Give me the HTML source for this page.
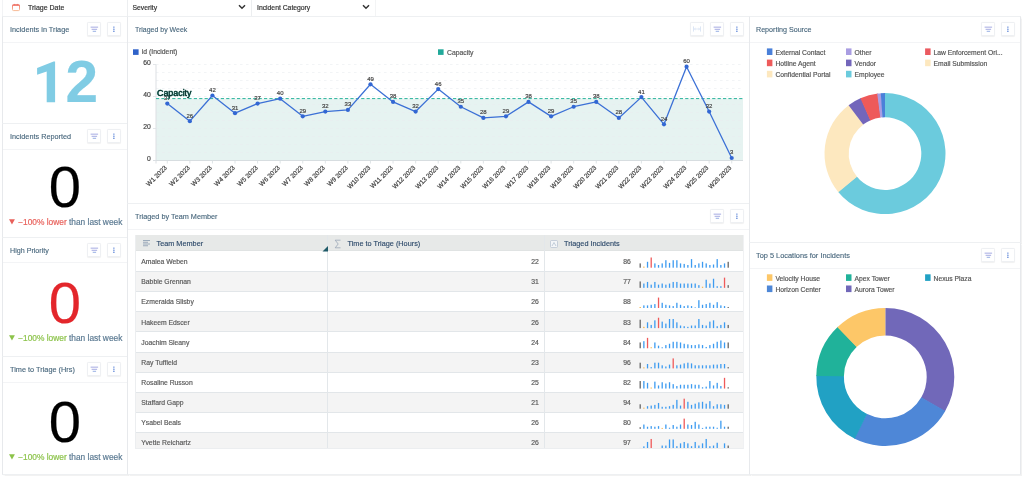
<!DOCTYPE html><html><head><meta charset="utf-8"><style>
*{box-sizing:border-box}
html,body{will-change:transform;-webkit-text-stroke-width:0.18px;margin:0;padding:0;width:1024px;height:478px;overflow:hidden;background:#fff;font-family:"Liberation Sans", sans-serif;}
.a{position:absolute;white-space:nowrap}
.panel{position:absolute;background:#fff;border:1px solid #eef0f2;border-left-color:#e7e9ec;border-right-color:#e7e9ec;box-shadow:0.5px 0.5px 1px rgba(0,0,0,0.05)}
.t{position:absolute;font-size:7.8px;color:#46657b;white-space:nowrap;line-height:10px;transform:scaleX(0.915);transform-origin:0 0;-webkit-text-stroke:0.12px #46657b}
.btn{position:absolute;width:14px;height:14px;border:1px solid #eef0f3;border-radius:1.5px;background:#fff;box-shadow:0 0.5px 1px rgba(0,0,0,0.06)}
.hd{position:absolute;height:1px;background:#f3f4f6}
</style></head><body>

<div class="a" style="left:127px;top:0;width:1px;height:16px;background:#eceef0"></div>
<div class="a" style="left:251px;top:0;width:1px;height:16px;background:#eceef0"></div>
<div class="a" style="left:375px;top:0;width:1px;height:16px;background:#f3f4f5"></div>
<svg class="a" style="left:11px;top:3px" width="10" height="9" viewBox="0 0 10 9">
<defs><linearGradient id="cg" x1="0" y1="0" x2="0" y2="1"><stop offset="0" stop-color="#ef6f62"/><stop offset="1" stop-color="#f6b38a"/></linearGradient></defs>
<rect x="1.5" y="1.7" width="7" height="5.9" rx="1" fill="none" stroke="url(#cg)" stroke-width="0.9"/>
<rect x="1.5" y="1.7" width="7" height="1.1" fill="#ef6f62"/>
<rect x="2.9" y="0.9" width="0.8" height="1.2" fill="#ef6f62"/><rect x="6.3" y="0.9" width="0.8" height="1.2" fill="#ef6f62"/>
</svg>
<div class="a" style="left:2px;top:0;width:1px;height:16px;background:#f2f3f5"></div>
<div class="a" style="left:28px;top:3px;font-size:7px;color:#333;line-height:10px">Triage Date</div>
<div class="a" style="left:132.5px;top:3px;font-size:6.8px;color:#333;line-height:10px">Severity</div>
<svg class="a" style="left:237.5px;top:4px" width="8" height="6" viewBox="0 0 8 6"><path d="M1 1.3 L4 4.2 L7 1.3" fill="none" stroke="#333" stroke-width="1.5"/></svg>
<div class="a" style="left:257px;top:3px;font-size:6.8px;color:#333;line-height:10px">Incident Category</div>
<svg class="a" style="left:362.3px;top:4px" width="8" height="6" viewBox="0 0 8 6"><path d="M1 1.3 L4 4.2 L7 1.3" fill="none" stroke="#333" stroke-width="1.5"/></svg>
<div class="panel" style="left:2px;top:16px;width:126px;height:108px"></div>
<div class="hd" style="left:3px;top:42px;width:124px"></div>
<div class="t" style="left:9.5px;top:25.05px;transform:scaleX(0.9370)">Incidents in Triage</div>
<div class="btn" style="left:107.20px;top:22.30px"></div>
<svg class="a" style="left:107.20px;top:22.30px" width="14" height="14" viewBox="0 0 14 14"><circle cx="6.9" cy="5.1" r="0.72" fill="#3f6fd0"/><circle cx="6.9" cy="7.15" r="0.72" fill="#3f6fd0"/><circle cx="6.9" cy="9.2" r="0.72" fill="#3f6fd0"/></svg>
<div class="btn" style="left:87.35px;top:22.30px"></div>
<svg class="a" style="left:87.35px;top:22.30px" width="14" height="14" viewBox="0 0 14 14"><rect x="3.6" y="4.75" width="7.5" height="0.7" fill="#7f86d6"/><rect x="4.6" y="6.85" width="5.5" height="0.7" fill="#7f86d6"/><rect x="5.7" y="8.85" width="3.4" height="0.7" fill="#6a8cd8"/></svg>
<div class="panel" style="left:2px;top:123px;width:126px;height:115px"></div>
<div class="hd" style="left:3px;top:149px;width:124px"></div>
<div class="t" style="left:9.5px;top:132.05px;transform:scaleX(0.9333)">Incidents Reported</div>
<div class="btn" style="left:107.20px;top:129.30px"></div>
<svg class="a" style="left:107.20px;top:129.30px" width="14" height="14" viewBox="0 0 14 14"><circle cx="6.9" cy="5.1" r="0.72" fill="#3f6fd0"/><circle cx="6.9" cy="7.15" r="0.72" fill="#3f6fd0"/><circle cx="6.9" cy="9.2" r="0.72" fill="#3f6fd0"/></svg>
<div class="btn" style="left:87.35px;top:129.30px"></div>
<svg class="a" style="left:87.35px;top:129.30px" width="14" height="14" viewBox="0 0 14 14"><rect x="3.6" y="4.75" width="7.5" height="0.7" fill="#7f86d6"/><rect x="4.6" y="6.85" width="5.5" height="0.7" fill="#7f86d6"/><rect x="5.7" y="8.85" width="3.4" height="0.7" fill="#6a8cd8"/></svg>
<div class="panel" style="left:2px;top:237px;width:126px;height:120px"></div>
<div class="hd" style="left:3px;top:262px;width:124px"></div>
<div class="t" style="left:9.5px;top:245.55px;transform:scaleX(0.9150)">High Priority</div>
<div class="btn" style="left:107.20px;top:242.80px"></div>
<svg class="a" style="left:107.20px;top:242.80px" width="14" height="14" viewBox="0 0 14 14"><circle cx="6.9" cy="5.1" r="0.72" fill="#3f6fd0"/><circle cx="6.9" cy="7.15" r="0.72" fill="#3f6fd0"/><circle cx="6.9" cy="9.2" r="0.72" fill="#3f6fd0"/></svg>
<div class="btn" style="left:87.35px;top:242.80px"></div>
<svg class="a" style="left:87.35px;top:242.80px" width="14" height="14" viewBox="0 0 14 14"><rect x="3.6" y="4.75" width="7.5" height="0.7" fill="#7f86d6"/><rect x="4.6" y="6.85" width="5.5" height="0.7" fill="#7f86d6"/><rect x="5.7" y="8.85" width="3.4" height="0.7" fill="#6a8cd8"/></svg>
<div class="panel" style="left:2px;top:356px;width:126px;height:119px"></div>
<div class="hd" style="left:3px;top:382px;width:124px"></div>
<div class="t" style="left:9.5px;top:364.55px;transform:scaleX(0.9397)">Time to Triage (Hrs)</div>
<div class="btn" style="left:107.20px;top:361.80px"></div>
<svg class="a" style="left:107.20px;top:361.80px" width="14" height="14" viewBox="0 0 14 14"><circle cx="6.9" cy="5.1" r="0.72" fill="#3f6fd0"/><circle cx="6.9" cy="7.15" r="0.72" fill="#3f6fd0"/><circle cx="6.9" cy="9.2" r="0.72" fill="#3f6fd0"/></svg>
<div class="btn" style="left:87.35px;top:361.80px"></div>
<svg class="a" style="left:87.35px;top:361.80px" width="14" height="14" viewBox="0 0 14 14"><rect x="3.6" y="4.75" width="7.5" height="0.7" fill="#7f86d6"/><rect x="4.6" y="6.85" width="5.5" height="0.7" fill="#7f86d6"/><rect x="5.7" y="8.85" width="3.4" height="0.7" fill="#6a8cd8"/></svg>
<div class="panel" style="left:127px;top:16px;width:623px;height:188px"></div>
<div class="hd" style="left:128px;top:42px;width:621px"></div>
<div class="t" style="left:134.5px;top:25.05px;transform:scaleX(0.8930)">Triaged by Week</div>
<div class="btn" style="left:729.70px;top:22.30px"></div>
<svg class="a" style="left:729.70px;top:22.30px" width="14" height="14" viewBox="0 0 14 14"><circle cx="6.9" cy="5.1" r="0.72" fill="#3f6fd0"/><circle cx="6.9" cy="7.15" r="0.72" fill="#3f6fd0"/><circle cx="6.9" cy="9.2" r="0.72" fill="#3f6fd0"/></svg>
<div class="btn" style="left:709.85px;top:22.30px"></div>
<svg class="a" style="left:709.85px;top:22.30px" width="14" height="14" viewBox="0 0 14 14"><rect x="3.6" y="4.75" width="7.5" height="0.7" fill="#7f86d6"/><rect x="4.6" y="6.85" width="5.5" height="0.7" fill="#7f86d6"/><rect x="5.7" y="8.85" width="3.4" height="0.7" fill="#6a8cd8"/></svg>
<div class="btn" style="left:690.00px;top:22.30px"></div>
<svg class="a" style="left:690.00px;top:22.30px" width="14" height="14" viewBox="0 0 14 14"><rect x="3.2" y="4.4" width="0.6" height="5.2" fill="#c5d5ee"/><rect x="10.2" y="4.4" width="0.6" height="5.2" fill="#c5d5ee"/><path d="M4.4 7 H9.6 M4.4 7 L5.6 6.1 M4.4 7 L5.6 7.9 M9.6 7 L8.4 6.1 M9.6 7 L8.4 7.9" stroke="#c5d5ee" stroke-width="0.5" fill="none"/></svg>
<div class="panel" style="left:127px;top:203px;width:623px;height:272px"></div>
<div class="hd" style="left:128px;top:229px;width:621px"></div>
<div class="t" style="left:134.5px;top:212.05px;transform:scaleX(0.9333)">Triaged by Team Member</div>
<div class="btn" style="left:729.70px;top:209.30px"></div>
<svg class="a" style="left:729.70px;top:209.30px" width="14" height="14" viewBox="0 0 14 14"><circle cx="6.9" cy="5.1" r="0.72" fill="#3f6fd0"/><circle cx="6.9" cy="7.15" r="0.72" fill="#3f6fd0"/><circle cx="6.9" cy="9.2" r="0.72" fill="#3f6fd0"/></svg>
<div class="btn" style="left:709.85px;top:209.30px"></div>
<svg class="a" style="left:709.85px;top:209.30px" width="14" height="14" viewBox="0 0 14 14"><rect x="3.6" y="4.75" width="7.5" height="0.7" fill="#7f86d6"/><rect x="4.6" y="6.85" width="5.5" height="0.7" fill="#7f86d6"/><rect x="5.7" y="8.85" width="3.4" height="0.7" fill="#6a8cd8"/></svg>
<div class="panel" style="left:749px;top:16px;width:272px;height:227px"></div>
<div class="hd" style="left:750px;top:42px;width:270px"></div>
<div class="t" style="left:756.0px;top:25.05px;transform:scaleX(0.9150)">Reporting Source</div>
<div class="btn" style="left:1001.20px;top:22.30px"></div>
<svg class="a" style="left:1001.20px;top:22.30px" width="14" height="14" viewBox="0 0 14 14"><circle cx="6.9" cy="5.1" r="0.72" fill="#3f6fd0"/><circle cx="6.9" cy="7.15" r="0.72" fill="#3f6fd0"/><circle cx="6.9" cy="9.2" r="0.72" fill="#3f6fd0"/></svg>
<div class="btn" style="left:981.35px;top:22.30px"></div>
<svg class="a" style="left:981.35px;top:22.30px" width="14" height="14" viewBox="0 0 14 14"><rect x="3.6" y="4.75" width="7.5" height="0.7" fill="#7f86d6"/><rect x="4.6" y="6.85" width="5.5" height="0.7" fill="#7f86d6"/><rect x="5.7" y="8.85" width="3.4" height="0.7" fill="#6a8cd8"/></svg>
<div class="panel" style="left:749px;top:242px;width:272px;height:233px"></div>
<div class="hd" style="left:750px;top:268px;width:270px"></div>
<div class="t" style="left:756.0px;top:251.05px;transform:scaleX(0.9461)">Top 5 Locations for Incidents</div>
<div class="btn" style="left:1001.20px;top:248.30px"></div>
<svg class="a" style="left:1001.20px;top:248.30px" width="14" height="14" viewBox="0 0 14 14"><circle cx="6.9" cy="5.1" r="0.72" fill="#3f6fd0"/><circle cx="6.9" cy="7.15" r="0.72" fill="#3f6fd0"/><circle cx="6.9" cy="9.2" r="0.72" fill="#3f6fd0"/></svg>
<div class="btn" style="left:981.35px;top:248.30px"></div>
<svg class="a" style="left:981.35px;top:248.30px" width="14" height="14" viewBox="0 0 14 14"><rect x="3.6" y="4.75" width="7.5" height="0.7" fill="#7f86d6"/><rect x="4.6" y="6.85" width="5.5" height="0.7" fill="#7f86d6"/><rect x="5.7" y="8.85" width="3.4" height="0.7" fill="#6a8cd8"/></svg>
<svg class="a" style="left:0;top:0" width="130" height="120" viewBox="0 0 130 120"><path d="M55.1,61.6 L55.1,102.2 L46.7,102.2 L46.7,71.4 L37.1,74.7 L37.1,67.9 L53.6,61.6 Z" fill="#80cce4"/></svg>
<div class="a" style="left:65.6px;top:51.6px;font-size:58.5px;line-height:60px;font-weight:bold;color:#80cce4">2</div>
<div class="a" style="left:3px;width:124px;top:156.8px;text-align:center;font-size:58px;line-height:60px;color:#000">0</div>
<div class="a" style="left:9.3px;top:216.9px;font-size:8.35px;line-height:10px;color:#5b7a92"><span style="color:#e8605a"><svg width="7" height="7" viewBox="0 0 7 7" style="position:absolute;left:0.1px;top:2.6px"><path d="M0 0.3 H5.9 L2.95 5.6 Z" fill="#e8605a"/></svg><span style="position:absolute;left:8.9px;top:0">&minus;100% lower<span style="color:#5b7a92"> than last week</span></span></span></div>
<div class="a" style="left:3px;width:124px;top:272.7px;text-align:center;font-size:58px;line-height:60px;color:#e3262b">0</div>
<div class="a" style="left:9.3px;top:332.9px;font-size:8.35px;line-height:10px;color:#5b7a92"><span style="color:#8cc34a"><svg width="7" height="7" viewBox="0 0 7 7" style="position:absolute;left:0.1px;top:2.6px"><path d="M0 0.3 H5.9 L2.95 5.6 Z" fill="#8cc34a"/></svg><span style="position:absolute;left:8.9px;top:0">&minus;100% lower<span style="color:#5b7a92"> than last week</span></span></span></div>
<div class="a" style="left:3px;width:124px;top:392px;text-align:center;font-size:58px;line-height:60px;color:#000">0</div>
<div class="a" style="left:9.3px;top:451.79999999999995px;font-size:8.35px;line-height:10px;color:#5b7a92"><span style="color:#8cc34a"><svg width="7" height="7" viewBox="0 0 7 7" style="position:absolute;left:0.1px;top:2.6px"><path d="M0 0.3 H5.9 L2.95 5.6 Z" fill="#8cc34a"/></svg><span style="position:absolute;left:8.9px;top:0">&minus;100% lower<span style="color:#5b7a92"> than last week</span></span></span></div>
<svg class="a" style="left:0;top:0" width="1024" height="478" viewBox="0 0 1024 478">
<rect x="133" y="49.3" width="5.6" height="5.6" fill="#2f62c9"/>

<rect x="438" y="49.3" width="5.6" height="5.6" fill="#22a99a"/>
<rect x="156.0" y="98.6" width="587.0" height="61.900000000000006" fill="#e6f3f1"/>
<line x1="156.0" y1="64.5" x2="743.0" y2="64.5" stroke="#eaedf0" stroke-width="0.6" stroke-dasharray="2.5,3.5"/>
<line x1="156.0" y1="72.5" x2="743.0" y2="72.5" stroke="#eaedf0" stroke-width="0.6" stroke-dasharray="2.5,3.5"/>
<line x1="156.0" y1="80.5" x2="743.0" y2="80.5" stroke="#eaedf0" stroke-width="0.6" stroke-dasharray="2.5,3.5"/>
<line x1="156.0" y1="88.5" x2="743.0" y2="88.5" stroke="#eaedf0" stroke-width="0.6" stroke-dasharray="2.5,3.5"/>
<line x1="156.0" y1="96.5" x2="743.0" y2="96.5" stroke="#eaedf0" stroke-width="0.6" stroke-dasharray="2.5,3.5"/>
<line x1="156.0" y1="104.5" x2="743.0" y2="104.5" stroke="#eaedf0" stroke-width="0.6" stroke-dasharray="2.5,3.5"/>
<line x1="156.0" y1="112.5" x2="743.0" y2="112.5" stroke="#eaedf0" stroke-width="0.6" stroke-dasharray="2.5,3.5"/>
<line x1="156.0" y1="120.5" x2="743.0" y2="120.5" stroke="#eaedf0" stroke-width="0.6" stroke-dasharray="2.5,3.5"/>
<line x1="156.0" y1="128.5" x2="743.0" y2="128.5" stroke="#eaedf0" stroke-width="0.6" stroke-dasharray="2.5,3.5"/>
<line x1="156.0" y1="136.5" x2="743.0" y2="136.5" stroke="#eaedf0" stroke-width="0.6" stroke-dasharray="2.5,3.5"/>
<line x1="156.0" y1="144.5" x2="743.0" y2="144.5" stroke="#eaedf0" stroke-width="0.6" stroke-dasharray="2.5,3.5"/>
<line x1="156.0" y1="152.5" x2="743.0" y2="152.5" stroke="#eaedf0" stroke-width="0.6" stroke-dasharray="2.5,3.5"/>
<line x1="156.0" y1="64.5" x2="156.0" y2="163.5" stroke="#dcdfe3" stroke-width="1"/>
<line x1="153.0" y1="160.5" x2="743.0" y2="160.5" stroke="#d7dde0" stroke-width="1"/>
<line x1="153.0" y1="160.5" x2="156.0" y2="160.5" stroke="#dcdfe3" stroke-width="0.8"/>
<line x1="153.0" y1="128.5" x2="156.0" y2="128.5" stroke="#dcdfe3" stroke-width="0.8"/>
<line x1="153.0" y1="96.5" x2="156.0" y2="96.5" stroke="#dcdfe3" stroke-width="0.8"/>
<line x1="153.0" y1="64.5" x2="156.0" y2="64.5" stroke="#dcdfe3" stroke-width="0.8"/>
<line x1="167.29" y1="160.5" x2="167.29" y2="163.5" stroke="#d7dde0" stroke-width="0.8"/>
<line x1="189.87" y1="160.5" x2="189.87" y2="163.5" stroke="#d7dde0" stroke-width="0.8"/>
<line x1="212.44" y1="160.5" x2="212.44" y2="163.5" stroke="#d7dde0" stroke-width="0.8"/>
<line x1="235.02" y1="160.5" x2="235.02" y2="163.5" stroke="#d7dde0" stroke-width="0.8"/>
<line x1="257.60" y1="160.5" x2="257.60" y2="163.5" stroke="#d7dde0" stroke-width="0.8"/>
<line x1="280.17" y1="160.5" x2="280.17" y2="163.5" stroke="#d7dde0" stroke-width="0.8"/>
<line x1="302.75" y1="160.5" x2="302.75" y2="163.5" stroke="#d7dde0" stroke-width="0.8"/>
<line x1="325.33" y1="160.5" x2="325.33" y2="163.5" stroke="#d7dde0" stroke-width="0.8"/>
<line x1="347.90" y1="160.5" x2="347.90" y2="163.5" stroke="#d7dde0" stroke-width="0.8"/>
<line x1="370.48" y1="160.5" x2="370.48" y2="163.5" stroke="#d7dde0" stroke-width="0.8"/>
<line x1="393.06" y1="160.5" x2="393.06" y2="163.5" stroke="#d7dde0" stroke-width="0.8"/>
<line x1="415.63" y1="160.5" x2="415.63" y2="163.5" stroke="#d7dde0" stroke-width="0.8"/>
<line x1="438.21" y1="160.5" x2="438.21" y2="163.5" stroke="#d7dde0" stroke-width="0.8"/>
<line x1="460.79" y1="160.5" x2="460.79" y2="163.5" stroke="#d7dde0" stroke-width="0.8"/>
<line x1="483.37" y1="160.5" x2="483.37" y2="163.5" stroke="#d7dde0" stroke-width="0.8"/>
<line x1="505.94" y1="160.5" x2="505.94" y2="163.5" stroke="#d7dde0" stroke-width="0.8"/>
<line x1="528.52" y1="160.5" x2="528.52" y2="163.5" stroke="#d7dde0" stroke-width="0.8"/>
<line x1="551.10" y1="160.5" x2="551.10" y2="163.5" stroke="#d7dde0" stroke-width="0.8"/>
<line x1="573.67" y1="160.5" x2="573.67" y2="163.5" stroke="#d7dde0" stroke-width="0.8"/>
<line x1="596.25" y1="160.5" x2="596.25" y2="163.5" stroke="#d7dde0" stroke-width="0.8"/>
<line x1="618.83" y1="160.5" x2="618.83" y2="163.5" stroke="#d7dde0" stroke-width="0.8"/>
<line x1="641.40" y1="160.5" x2="641.40" y2="163.5" stroke="#d7dde0" stroke-width="0.8"/>
<line x1="663.98" y1="160.5" x2="663.98" y2="163.5" stroke="#d7dde0" stroke-width="0.8"/>
<line x1="686.56" y1="160.5" x2="686.56" y2="163.5" stroke="#d7dde0" stroke-width="0.8"/>
<line x1="709.13" y1="160.5" x2="709.13" y2="163.5" stroke="#d7dde0" stroke-width="0.8"/>
<line x1="731.71" y1="160.5" x2="731.71" y2="163.5" stroke="#d7dde0" stroke-width="0.8"/>
<line x1="156.0" y1="98.6" x2="743.0" y2="98.6" stroke="#2bb39b" stroke-width="1" stroke-dasharray="3.2,2.2"/>
<polyline points="167.29,103.53 189.87,121.15 212.44,95.52 235.02,113.14 257.60,103.53 280.17,98.72 302.75,116.34 325.33,111.54 347.90,109.93 370.48,84.30 393.06,101.92 415.63,111.54 438.21,89.11 460.79,106.73 483.37,117.94 505.94,116.34 528.52,101.92 551.10,116.34 573.67,106.73 596.25,101.92 618.83,117.94 641.40,97.12 663.98,124.35 686.56,66.68 709.13,111.54 731.71,157.99" fill="none" stroke="#3b70d6" stroke-width="1.3" stroke-linejoin="round"/>
<circle cx="167.29" cy="103.53" r="2.1" fill="#3267d3"/>
<circle cx="189.87" cy="121.15" r="2.1" fill="#3267d3"/>
<circle cx="212.44" cy="95.52" r="2.1" fill="#3267d3"/>
<circle cx="235.02" cy="113.14" r="2.1" fill="#3267d3"/>
<circle cx="257.60" cy="103.53" r="2.1" fill="#3267d3"/>
<circle cx="280.17" cy="98.72" r="2.1" fill="#3267d3"/>
<circle cx="302.75" cy="116.34" r="2.1" fill="#3267d3"/>
<circle cx="325.33" cy="111.54" r="2.1" fill="#3267d3"/>
<circle cx="347.90" cy="109.93" r="2.1" fill="#3267d3"/>
<circle cx="370.48" cy="84.30" r="2.1" fill="#3267d3"/>
<circle cx="393.06" cy="101.92" r="2.1" fill="#3267d3"/>
<circle cx="415.63" cy="111.54" r="2.1" fill="#3267d3"/>
<circle cx="438.21" cy="89.11" r="2.1" fill="#3267d3"/>
<circle cx="460.79" cy="106.73" r="2.1" fill="#3267d3"/>
<circle cx="483.37" cy="117.94" r="2.1" fill="#3267d3"/>
<circle cx="505.94" cy="116.34" r="2.1" fill="#3267d3"/>
<circle cx="528.52" cy="101.92" r="2.1" fill="#3267d3"/>
<circle cx="551.10" cy="116.34" r="2.1" fill="#3267d3"/>
<circle cx="573.67" cy="106.73" r="2.1" fill="#3267d3"/>
<circle cx="596.25" cy="101.92" r="2.1" fill="#3267d3"/>
<circle cx="618.83" cy="117.94" r="2.1" fill="#3267d3"/>
<circle cx="641.40" cy="97.12" r="2.1" fill="#3267d3"/>
<circle cx="663.98" cy="124.35" r="2.1" fill="#3267d3"/>
<circle cx="686.56" cy="66.68" r="2.1" fill="#3267d3"/>
<circle cx="709.13" cy="111.54" r="2.1" fill="#3267d3"/>
<circle cx="731.71" cy="157.99" r="2.1" fill="#3267d3"/>
</svg>
<div class="a" style="left:141.8px;top:47.4px;font-size:6.8px;line-height:10px;color:#555">id (Incident)</div>
<div class="a" style="left:447px;top:47.7px;font-size:6.8px;line-height:10px;color:#555">Capacity</div>
<div class="a" style="left:120px;width:30.8px;text-align:right;top:153.5px;font-size:6.8px;line-height:10px;color:#444">0</div>
<div class="a" style="left:120px;width:30.8px;text-align:right;top:121.5px;font-size:6.8px;line-height:10px;color:#444">20</div>
<div class="a" style="left:120px;width:30.8px;text-align:right;top:89.5px;font-size:6.8px;line-height:10px;color:#444">40</div>
<div class="a" style="left:120px;width:30.8px;text-align:right;top:57.5px;font-size:6.8px;line-height:10px;color:#444">60</div>
<div class="a" style="left:157.29px;width:20px;text-align:center;top:93.93px;font-size:6px;line-height:8px;color:#444">37</div>
<div class="a" style="left:179.87px;width:20px;text-align:center;top:111.55px;font-size:6px;line-height:8px;color:#444">26</div>
<div class="a" style="left:202.44px;width:20px;text-align:center;top:85.92px;font-size:6px;line-height:8px;color:#444">42</div>
<div class="a" style="left:225.02px;width:20px;text-align:center;top:103.54px;font-size:6px;line-height:8px;color:#444">31</div>
<div class="a" style="left:247.60px;width:20px;text-align:center;top:93.93px;font-size:6px;line-height:8px;color:#444">37</div>
<div class="a" style="left:270.17px;width:20px;text-align:center;top:89.12px;font-size:6px;line-height:8px;color:#444">40</div>
<div class="a" style="left:292.75px;width:20px;text-align:center;top:106.74px;font-size:6px;line-height:8px;color:#444">29</div>
<div class="a" style="left:315.33px;width:20px;text-align:center;top:101.94px;font-size:6px;line-height:8px;color:#444">32</div>
<div class="a" style="left:337.90px;width:20px;text-align:center;top:100.33px;font-size:6px;line-height:8px;color:#444">33</div>
<div class="a" style="left:360.48px;width:20px;text-align:center;top:74.70px;font-size:6px;line-height:8px;color:#444">49</div>
<div class="a" style="left:383.06px;width:20px;text-align:center;top:92.32px;font-size:6px;line-height:8px;color:#444">38</div>
<div class="a" style="left:405.63px;width:20px;text-align:center;top:101.94px;font-size:6px;line-height:8px;color:#444">32</div>
<div class="a" style="left:428.21px;width:20px;text-align:center;top:79.51px;font-size:6px;line-height:8px;color:#444">46</div>
<div class="a" style="left:450.79px;width:20px;text-align:center;top:97.13px;font-size:6px;line-height:8px;color:#444">35</div>
<div class="a" style="left:473.37px;width:20px;text-align:center;top:108.34px;font-size:6px;line-height:8px;color:#444">28</div>
<div class="a" style="left:495.94px;width:20px;text-align:center;top:106.74px;font-size:6px;line-height:8px;color:#444">29</div>
<div class="a" style="left:518.52px;width:20px;text-align:center;top:92.32px;font-size:6px;line-height:8px;color:#444">38</div>
<div class="a" style="left:541.10px;width:20px;text-align:center;top:106.74px;font-size:6px;line-height:8px;color:#444">29</div>
<div class="a" style="left:563.67px;width:20px;text-align:center;top:97.13px;font-size:6px;line-height:8px;color:#444">35</div>
<div class="a" style="left:586.25px;width:20px;text-align:center;top:92.32px;font-size:6px;line-height:8px;color:#444">38</div>
<div class="a" style="left:608.83px;width:20px;text-align:center;top:108.34px;font-size:6px;line-height:8px;color:#444">28</div>
<div class="a" style="left:631.40px;width:20px;text-align:center;top:87.52px;font-size:6px;line-height:8px;color:#444">41</div>
<div class="a" style="left:653.98px;width:20px;text-align:center;top:114.75px;font-size:6px;line-height:8px;color:#444">24</div>
<div class="a" style="left:676.56px;width:20px;text-align:center;top:57.08px;font-size:6px;line-height:8px;color:#444">60</div>
<div class="a" style="left:699.13px;width:20px;text-align:center;top:101.94px;font-size:6px;line-height:8px;color:#444">32</div>
<div class="a" style="left:721.71px;width:20px;text-align:center;top:148.39px;font-size:6px;line-height:8px;color:#444">3</div>
<div class="a" style="left:156.6px;top:86.9px;font-size:9.6px;line-height:12px;color:#0c2826;-webkit-text-stroke:0.3px #0c2826;text-shadow:0 0 0.8px #2bb39b,0 0 0.8px #2bb39b;transform:scaleX(0.925);transform-origin:0 0">Capacity</div>
<div class="a" style="left:163.29px;top:163.5px;width:0;height:0"><div style="position:absolute;right:0;top:0;transform-origin:100% 0;transform:rotate(-45deg);font-size:6.5px;line-height:8px;color:#444;-webkit-text-stroke:0.2px #444;white-space:nowrap">W1 2023</div></div>
<div class="a" style="left:185.87px;top:163.5px;width:0;height:0"><div style="position:absolute;right:0;top:0;transform-origin:100% 0;transform:rotate(-45deg);font-size:6.5px;line-height:8px;color:#444;-webkit-text-stroke:0.2px #444;white-space:nowrap">W2 2023</div></div>
<div class="a" style="left:208.44px;top:163.5px;width:0;height:0"><div style="position:absolute;right:0;top:0;transform-origin:100% 0;transform:rotate(-45deg);font-size:6.5px;line-height:8px;color:#444;-webkit-text-stroke:0.2px #444;white-space:nowrap">W3 2023</div></div>
<div class="a" style="left:231.02px;top:163.5px;width:0;height:0"><div style="position:absolute;right:0;top:0;transform-origin:100% 0;transform:rotate(-45deg);font-size:6.5px;line-height:8px;color:#444;-webkit-text-stroke:0.2px #444;white-space:nowrap">W4 2023</div></div>
<div class="a" style="left:253.60px;top:163.5px;width:0;height:0"><div style="position:absolute;right:0;top:0;transform-origin:100% 0;transform:rotate(-45deg);font-size:6.5px;line-height:8px;color:#444;-webkit-text-stroke:0.2px #444;white-space:nowrap">W5 2023</div></div>
<div class="a" style="left:276.17px;top:163.5px;width:0;height:0"><div style="position:absolute;right:0;top:0;transform-origin:100% 0;transform:rotate(-45deg);font-size:6.5px;line-height:8px;color:#444;-webkit-text-stroke:0.2px #444;white-space:nowrap">W6 2023</div></div>
<div class="a" style="left:298.75px;top:163.5px;width:0;height:0"><div style="position:absolute;right:0;top:0;transform-origin:100% 0;transform:rotate(-45deg);font-size:6.5px;line-height:8px;color:#444;-webkit-text-stroke:0.2px #444;white-space:nowrap">W7 2023</div></div>
<div class="a" style="left:321.33px;top:163.5px;width:0;height:0"><div style="position:absolute;right:0;top:0;transform-origin:100% 0;transform:rotate(-45deg);font-size:6.5px;line-height:8px;color:#444;-webkit-text-stroke:0.2px #444;white-space:nowrap">W8 2023</div></div>
<div class="a" style="left:343.90px;top:163.5px;width:0;height:0"><div style="position:absolute;right:0;top:0;transform-origin:100% 0;transform:rotate(-45deg);font-size:6.5px;line-height:8px;color:#444;-webkit-text-stroke:0.2px #444;white-space:nowrap">W9 2023</div></div>
<div class="a" style="left:366.48px;top:163.5px;width:0;height:0"><div style="position:absolute;right:0;top:0;transform-origin:100% 0;transform:rotate(-45deg);font-size:6.5px;line-height:8px;color:#444;-webkit-text-stroke:0.2px #444;white-space:nowrap">W10 2023</div></div>
<div class="a" style="left:389.06px;top:163.5px;width:0;height:0"><div style="position:absolute;right:0;top:0;transform-origin:100% 0;transform:rotate(-45deg);font-size:6.5px;line-height:8px;color:#444;-webkit-text-stroke:0.2px #444;white-space:nowrap">W11 2023</div></div>
<div class="a" style="left:411.63px;top:163.5px;width:0;height:0"><div style="position:absolute;right:0;top:0;transform-origin:100% 0;transform:rotate(-45deg);font-size:6.5px;line-height:8px;color:#444;-webkit-text-stroke:0.2px #444;white-space:nowrap">W12 2023</div></div>
<div class="a" style="left:434.21px;top:163.5px;width:0;height:0"><div style="position:absolute;right:0;top:0;transform-origin:100% 0;transform:rotate(-45deg);font-size:6.5px;line-height:8px;color:#444;-webkit-text-stroke:0.2px #444;white-space:nowrap">W13 2023</div></div>
<div class="a" style="left:456.79px;top:163.5px;width:0;height:0"><div style="position:absolute;right:0;top:0;transform-origin:100% 0;transform:rotate(-45deg);font-size:6.5px;line-height:8px;color:#444;-webkit-text-stroke:0.2px #444;white-space:nowrap">W14 2023</div></div>
<div class="a" style="left:479.37px;top:163.5px;width:0;height:0"><div style="position:absolute;right:0;top:0;transform-origin:100% 0;transform:rotate(-45deg);font-size:6.5px;line-height:8px;color:#444;-webkit-text-stroke:0.2px #444;white-space:nowrap">W15 2023</div></div>
<div class="a" style="left:501.94px;top:163.5px;width:0;height:0"><div style="position:absolute;right:0;top:0;transform-origin:100% 0;transform:rotate(-45deg);font-size:6.5px;line-height:8px;color:#444;-webkit-text-stroke:0.2px #444;white-space:nowrap">W16 2023</div></div>
<div class="a" style="left:524.52px;top:163.5px;width:0;height:0"><div style="position:absolute;right:0;top:0;transform-origin:100% 0;transform:rotate(-45deg);font-size:6.5px;line-height:8px;color:#444;-webkit-text-stroke:0.2px #444;white-space:nowrap">W17 2023</div></div>
<div class="a" style="left:547.10px;top:163.5px;width:0;height:0"><div style="position:absolute;right:0;top:0;transform-origin:100% 0;transform:rotate(-45deg);font-size:6.5px;line-height:8px;color:#444;-webkit-text-stroke:0.2px #444;white-space:nowrap">W18 2023</div></div>
<div class="a" style="left:569.67px;top:163.5px;width:0;height:0"><div style="position:absolute;right:0;top:0;transform-origin:100% 0;transform:rotate(-45deg);font-size:6.5px;line-height:8px;color:#444;-webkit-text-stroke:0.2px #444;white-space:nowrap">W19 2023</div></div>
<div class="a" style="left:592.25px;top:163.5px;width:0;height:0"><div style="position:absolute;right:0;top:0;transform-origin:100% 0;transform:rotate(-45deg);font-size:6.5px;line-height:8px;color:#444;-webkit-text-stroke:0.2px #444;white-space:nowrap">W20 2023</div></div>
<div class="a" style="left:614.83px;top:163.5px;width:0;height:0"><div style="position:absolute;right:0;top:0;transform-origin:100% 0;transform:rotate(-45deg);font-size:6.5px;line-height:8px;color:#444;-webkit-text-stroke:0.2px #444;white-space:nowrap">W21 2023</div></div>
<div class="a" style="left:637.40px;top:163.5px;width:0;height:0"><div style="position:absolute;right:0;top:0;transform-origin:100% 0;transform:rotate(-45deg);font-size:6.5px;line-height:8px;color:#444;-webkit-text-stroke:0.2px #444;white-space:nowrap">W22 2023</div></div>
<div class="a" style="left:659.98px;top:163.5px;width:0;height:0"><div style="position:absolute;right:0;top:0;transform-origin:100% 0;transform:rotate(-45deg);font-size:6.5px;line-height:8px;color:#444;-webkit-text-stroke:0.2px #444;white-space:nowrap">W23 2023</div></div>
<div class="a" style="left:682.56px;top:163.5px;width:0;height:0"><div style="position:absolute;right:0;top:0;transform-origin:100% 0;transform:rotate(-45deg);font-size:6.5px;line-height:8px;color:#444;-webkit-text-stroke:0.2px #444;white-space:nowrap">W24 2023</div></div>
<div class="a" style="left:705.13px;top:163.5px;width:0;height:0"><div style="position:absolute;right:0;top:0;transform-origin:100% 0;transform:rotate(-45deg);font-size:6.5px;line-height:8px;color:#444;-webkit-text-stroke:0.2px #444;white-space:nowrap">W25 2023</div></div>
<div class="a" style="left:727.71px;top:163.5px;width:0;height:0"><div style="position:absolute;right:0;top:0;transform-origin:100% 0;transform:rotate(-45deg);font-size:6.5px;line-height:8px;color:#444;-webkit-text-stroke:0.2px #444;white-space:nowrap">W26 2023</div></div>
<div class="a" style="left:135.0px;top:235.0px;width:608.0px;height:213.0px;overflow:hidden;background:#fff">
<div class="a" style="left:0;top:0;width:608.0px;height:16.0px;background:#e7e9e8;border-bottom:0.5px solid #e0e3e3"></div>
<div class="a" style="left:0;top:16.00px;width:608.0px;height:20.34px;background:#fff"></div>
<div class="a" style="left:6.30px;top:22.10px;font-size:6.8px;line-height:10px;color:#5a5a5a">Amalea Weben</div>
<div class="a" style="left:192.00px;width:211.80px;text-align:right;top:22.10px;font-size:6.8px;line-height:10px;color:#5a5a5a">22</div>
<div class="a" style="left:409.00px;width:86.80px;text-align:right;top:22.10px;font-size:6.8px;line-height:10px;color:#5a5a5a">86</div>
<div class="a" style="left:0;top:36.14px;width:608.0px;height:20.34px;background:#f4f4f4"></div>
<div class="a" style="left:6.30px;top:42.24px;font-size:6.8px;line-height:10px;color:#5a5a5a">Babbie Grennan</div>
<div class="a" style="left:192.00px;width:211.80px;text-align:right;top:42.24px;font-size:6.8px;line-height:10px;color:#5a5a5a">31</div>
<div class="a" style="left:409.00px;width:86.80px;text-align:right;top:42.24px;font-size:6.8px;line-height:10px;color:#5a5a5a">77</div>
<div class="a" style="left:0;top:56.28px;width:608.0px;height:20.34px;background:#fff"></div>
<div class="a" style="left:6.30px;top:62.38px;font-size:6.8px;line-height:10px;color:#5a5a5a">Ezmeralda Slisby</div>
<div class="a" style="left:192.00px;width:211.80px;text-align:right;top:62.38px;font-size:6.8px;line-height:10px;color:#5a5a5a">26</div>
<div class="a" style="left:409.00px;width:86.80px;text-align:right;top:62.38px;font-size:6.8px;line-height:10px;color:#5a5a5a">88</div>
<div class="a" style="left:0;top:76.42px;width:608.0px;height:20.34px;background:#f4f4f4"></div>
<div class="a" style="left:6.30px;top:82.52px;font-size:6.8px;line-height:10px;color:#5a5a5a">Hakeem Edscer</div>
<div class="a" style="left:192.00px;width:211.80px;text-align:right;top:82.52px;font-size:6.8px;line-height:10px;color:#5a5a5a">26</div>
<div class="a" style="left:409.00px;width:86.80px;text-align:right;top:82.52px;font-size:6.8px;line-height:10px;color:#5a5a5a">83</div>
<div class="a" style="left:0;top:96.56px;width:608.0px;height:20.34px;background:#fff"></div>
<div class="a" style="left:6.30px;top:102.66px;font-size:6.8px;line-height:10px;color:#5a5a5a">Joachim Sleany</div>
<div class="a" style="left:192.00px;width:211.80px;text-align:right;top:102.66px;font-size:6.8px;line-height:10px;color:#5a5a5a">24</div>
<div class="a" style="left:409.00px;width:86.80px;text-align:right;top:102.66px;font-size:6.8px;line-height:10px;color:#5a5a5a">84</div>
<div class="a" style="left:0;top:116.70px;width:608.0px;height:20.34px;background:#f4f4f4"></div>
<div class="a" style="left:6.30px;top:122.80px;font-size:6.8px;line-height:10px;color:#5a5a5a">Ray Tuffield</div>
<div class="a" style="left:192.00px;width:211.80px;text-align:right;top:122.80px;font-size:6.8px;line-height:10px;color:#5a5a5a">23</div>
<div class="a" style="left:409.00px;width:86.80px;text-align:right;top:122.80px;font-size:6.8px;line-height:10px;color:#5a5a5a">96</div>
<div class="a" style="left:0;top:136.84px;width:608.0px;height:20.34px;background:#fff"></div>
<div class="a" style="left:6.30px;top:142.94px;font-size:6.8px;line-height:10px;color:#5a5a5a">Rosaline Russon</div>
<div class="a" style="left:192.00px;width:211.80px;text-align:right;top:142.94px;font-size:6.8px;line-height:10px;color:#5a5a5a">25</div>
<div class="a" style="left:409.00px;width:86.80px;text-align:right;top:142.94px;font-size:6.8px;line-height:10px;color:#5a5a5a">82</div>
<div class="a" style="left:0;top:156.98px;width:608.0px;height:20.34px;background:#f4f4f4"></div>
<div class="a" style="left:6.30px;top:163.08px;font-size:6.8px;line-height:10px;color:#5a5a5a">Staffard Gapp</div>
<div class="a" style="left:192.00px;width:211.80px;text-align:right;top:163.08px;font-size:6.8px;line-height:10px;color:#5a5a5a">21</div>
<div class="a" style="left:409.00px;width:86.80px;text-align:right;top:163.08px;font-size:6.8px;line-height:10px;color:#5a5a5a">94</div>
<div class="a" style="left:0;top:177.12px;width:608.0px;height:20.34px;background:#fff"></div>
<div class="a" style="left:6.30px;top:183.22px;font-size:6.8px;line-height:10px;color:#5a5a5a">Ysabel Beals</div>
<div class="a" style="left:192.00px;width:211.80px;text-align:right;top:183.22px;font-size:6.8px;line-height:10px;color:#5a5a5a">26</div>
<div class="a" style="left:409.00px;width:86.80px;text-align:right;top:183.22px;font-size:6.8px;line-height:10px;color:#5a5a5a">80</div>
<div class="a" style="left:0;top:197.26px;width:608.0px;height:20.34px;background:#f4f4f4"></div>
<div class="a" style="left:6.30px;top:203.36px;font-size:6.8px;line-height:10px;color:#5a5a5a">Yvette Reichartz</div>
<div class="a" style="left:192.00px;width:211.80px;text-align:right;top:203.36px;font-size:6.8px;line-height:10px;color:#5a5a5a">26</div>
<div class="a" style="left:409.00px;width:86.80px;text-align:right;top:203.36px;font-size:6.8px;line-height:10px;color:#5a5a5a">97</div>
<div class="a" style="left:0;top:36.04px;width:608.0px;height:1px;background:#e2e6e9"></div>
<div class="a" style="left:0;top:56.18px;width:608.0px;height:1px;background:#e2e6e9"></div>
<div class="a" style="left:0;top:76.32px;width:608.0px;height:1px;background:#e2e6e9"></div>
<div class="a" style="left:0;top:96.46px;width:608.0px;height:1px;background:#e2e6e9"></div>
<div class="a" style="left:0;top:116.60px;width:608.0px;height:1px;background:#e2e6e9"></div>
<div class="a" style="left:0;top:136.74px;width:608.0px;height:1px;background:#e2e6e9"></div>
<div class="a" style="left:0;top:156.88px;width:608.0px;height:1px;background:#e2e6e9"></div>
<div class="a" style="left:0;top:177.02px;width:608.0px;height:1px;background:#e2e6e9"></div>
<div class="a" style="left:0;top:197.16px;width:608.0px;height:1px;background:#e2e6e9"></div>
<div class="a" style="left:0;top:217.30px;width:608.0px;height:1px;background:#e2e6e9"></div>
<div class="a" style="left:192.00px;top:0;width:1px;height:213.0px;background:#e3e7ea"></div>
<div class="a" style="left:409.00px;top:0;width:1px;height:213.0px;background:#e3e7ea"></div>
</div>
<div class="a" style="left:134.5px;top:235.0px;width:609.0px;height:213.5px;border:1px solid #eceef0;border-top:none;border-right-color:#f0f1f3"></div>
<svg class="a" style="left:142px;top:239px" width="10" height="9" viewBox="0 0 10 9"><rect x="1" y="1" width="7" height="0.8" fill="#8a9bb0"/><rect x="1" y="2.8" width="5" height="0.8" fill="#8a9bb0"/><rect x="1" y="4.6" width="7" height="0.8" fill="#8a9bb0"/><rect x="1" y="6.4" width="5" height="0.8" fill="#8a9bb0"/></svg>
<div class="a" style="left:156.5px;top:239px;font-size:7.3px;line-height:10px;color:#2a4768;-webkit-text-stroke:0.12px #2a4768">Team Member</div>
<svg class="a" style="left:322px;top:245.5px" width="6" height="6" viewBox="0 0 6 6"><path d="M6 0 L6 5.5 L0.5 5.5 Z" fill="#1f5a68"/></svg>
<svg class="a" style="left:333.5px;top:238.5px" width="8" height="10" viewBox="0 0 8 10"><path d="M6.5 1.2 H1.2 L4.2 5 L1.2 8.8 H6.5" fill="none" stroke="#8f9db0" stroke-width="0.7"/></svg>
<div class="a" style="left:347.5px;top:239px;font-size:7.3px;line-height:10px;color:#2a4768;-webkit-text-stroke:0.12px #2a4768">Time to Triage (Hours)</div>
<svg class="a" style="left:550px;top:240px" width="8" height="8" viewBox="0 0 8 8"><rect x="0.5" y="0.5" width="7" height="7" rx="1" fill="#f4f6f8" stroke="#b5c2d0" stroke-width="0.7"/><path d="M2 6 L4 2.5 L6 6" fill="none" stroke="#9fb0c3" stroke-width="0.6"/></svg>
<div class="a" style="left:564px;top:239px;font-size:7.3px;line-height:10px;color:#2a4768;-webkit-text-stroke:0.12px #2a4768">Triaged Incidents</div>
<div class="a" style="left:0;top:0;width:1024px;height:448.0px;overflow:hidden"><svg class="a" style="left:0;top:0" width="1024" height="478" viewBox="0 0 1024 478">
<rect x="639.55" y="263.40" width="1.3" height="4.30" fill="#666"/>
<rect x="643.22" y="266.60" width="1.3" height="1.10" fill="#f5b041"/>
<rect x="646.88" y="261.80" width="1.3" height="5.90" fill="#3d9bf0"/>
<rect x="650.55" y="257.50" width="1.3" height="10.20" fill="#ef5a5a"/>
<rect x="654.22" y="263.40" width="1.3" height="4.30" fill="#3d9bf0"/>
<rect x="657.88" y="265.00" width="1.3" height="2.70" fill="#3d9bf0"/>
<rect x="661.55" y="263.40" width="1.3" height="4.30" fill="#3d9bf0"/>
<rect x="665.22" y="260.20" width="1.3" height="7.50" fill="#3d9bf0"/>
<rect x="668.88" y="262.90" width="1.3" height="4.80" fill="#3d9bf0"/>
<rect x="672.55" y="260.20" width="1.3" height="7.50" fill="#3d9bf0"/>
<rect x="676.22" y="260.20" width="1.3" height="7.50" fill="#3d9bf0"/>
<rect x="679.88" y="263.40" width="1.3" height="4.30" fill="#3d9bf0"/>
<rect x="683.55" y="263.90" width="1.3" height="3.80" fill="#3d9bf0"/>
<rect x="687.22" y="265.00" width="1.3" height="2.70" fill="#3d9bf0"/>
<rect x="690.88" y="259.10" width="1.3" height="8.60" fill="#3d9bf0"/>
<rect x="694.55" y="265.00" width="1.3" height="2.70" fill="#3d9bf0"/>
<rect x="698.22" y="263.40" width="1.3" height="4.30" fill="#3d9bf0"/>
<rect x="701.88" y="261.80" width="1.3" height="5.90" fill="#3d9bf0"/>
<rect x="705.55" y="263.40" width="1.3" height="4.30" fill="#3d9bf0"/>
<rect x="709.22" y="265.00" width="1.3" height="2.70" fill="#3d9bf0"/>
<rect x="712.88" y="264.50" width="1.3" height="3.20" fill="#3d9bf0"/>
<rect x="716.55" y="259.10" width="1.3" height="8.60" fill="#3d9bf0"/>
<rect x="720.22" y="265.00" width="1.3" height="2.70" fill="#3d9bf0"/>
<rect x="723.88" y="263.40" width="1.3" height="4.30" fill="#3d9bf0"/>
<rect x="727.55" y="261.80" width="1.3" height="5.90" fill="#666"/>
<rect x="639.55" y="281.44" width="1.3" height="6.40" fill="#666"/>
<rect x="643.22" y="283.54" width="1.3" height="4.30" fill="#3d9bf0"/>
<rect x="646.88" y="281.94" width="1.3" height="5.90" fill="#3d9bf0"/>
<rect x="650.55" y="284.64" width="1.3" height="3.20" fill="#3d9bf0"/>
<rect x="654.22" y="281.94" width="1.3" height="5.90" fill="#3d9bf0"/>
<rect x="657.88" y="284.64" width="1.3" height="3.20" fill="#3d9bf0"/>
<rect x="661.55" y="283.54" width="1.3" height="4.30" fill="#3d9bf0"/>
<rect x="665.22" y="284.64" width="1.3" height="3.20" fill="#3d9bf0"/>
<rect x="668.88" y="283.54" width="1.3" height="4.30" fill="#3d9bf0"/>
<rect x="672.55" y="281.94" width="1.3" height="5.90" fill="#3d9bf0"/>
<rect x="676.22" y="281.94" width="1.3" height="5.90" fill="#3d9bf0"/>
<rect x="679.88" y="283.54" width="1.3" height="4.30" fill="#3d9bf0"/>
<rect x="683.55" y="283.54" width="1.3" height="4.30" fill="#3d9bf0"/>
<rect x="687.22" y="283.54" width="1.3" height="4.30" fill="#3d9bf0"/>
<rect x="690.88" y="283.54" width="1.3" height="4.30" fill="#3d9bf0"/>
<rect x="694.55" y="283.54" width="1.3" height="4.30" fill="#3d9bf0"/>
<rect x="698.22" y="285.14" width="1.3" height="2.70" fill="#3d9bf0"/>
<rect x="701.88" y="286.74" width="1.3" height="1.10" fill="#f5b041"/>
<rect x="705.55" y="279.74" width="1.3" height="8.10" fill="#3d9bf0"/>
<rect x="709.22" y="283.54" width="1.3" height="4.30" fill="#3d9bf0"/>
<rect x="712.88" y="278.74" width="1.3" height="9.10" fill="#3d9bf0"/>
<rect x="716.55" y="286.24" width="1.3" height="1.60" fill="#3d9bf0"/>
<rect x="720.22" y="286.24" width="1.3" height="1.60" fill="#3d9bf0"/>
<rect x="723.88" y="277.64" width="1.3" height="10.20" fill="#ef5a5a"/>
<rect x="727.55" y="285.14" width="1.3" height="2.70" fill="#666"/>
<rect x="639.55" y="306.98" width="1.3" height="1.00" fill="#f5b041"/>
<rect x="643.22" y="305.38" width="1.3" height="2.60" fill="#3d9bf0"/>
<rect x="646.88" y="305.38" width="1.3" height="2.60" fill="#3d9bf0"/>
<rect x="650.55" y="304.78" width="1.3" height="3.20" fill="#3d9bf0"/>
<rect x="654.22" y="304.08" width="1.3" height="3.90" fill="#3d9bf0"/>
<rect x="657.88" y="297.58" width="1.3" height="10.40" fill="#ef5a5a"/>
<rect x="661.55" y="302.78" width="1.3" height="5.20" fill="#3d9bf0"/>
<rect x="665.22" y="304.78" width="1.3" height="3.20" fill="#3d9bf0"/>
<rect x="668.88" y="305.38" width="1.3" height="2.60" fill="#3d9bf0"/>
<rect x="672.55" y="306.08" width="1.3" height="1.90" fill="#3d9bf0"/>
<rect x="676.22" y="302.78" width="1.3" height="5.20" fill="#3d9bf0"/>
<rect x="679.88" y="304.78" width="1.3" height="3.20" fill="#3d9bf0"/>
<rect x="683.55" y="306.08" width="1.3" height="1.90" fill="#3d9bf0"/>
<rect x="687.22" y="305.38" width="1.3" height="2.60" fill="#3d9bf0"/>
<rect x="690.88" y="306.08" width="1.3" height="1.90" fill="#3d9bf0"/>
<rect x="694.55" y="307.38" width="1.3" height="0.60" fill="#3d9bf0"/>
<rect x="698.22" y="300.18" width="1.3" height="7.80" fill="#3d9bf0"/>
<rect x="701.88" y="304.78" width="1.3" height="3.20" fill="#3d9bf0"/>
<rect x="705.55" y="304.08" width="1.3" height="3.90" fill="#3d9bf0"/>
<rect x="709.22" y="302.78" width="1.3" height="5.20" fill="#3d9bf0"/>
<rect x="712.88" y="304.78" width="1.3" height="3.20" fill="#3d9bf0"/>
<rect x="716.55" y="302.18" width="1.3" height="5.80" fill="#3d9bf0"/>
<rect x="720.22" y="305.38" width="1.3" height="2.60" fill="#3d9bf0"/>
<rect x="723.88" y="306.08" width="1.3" height="1.90" fill="#3d9bf0"/>
<rect x="727.55" y="306.98" width="1.3" height="1.00" fill="#666"/>
<rect x="639.55" y="319.72" width="1.3" height="8.40" fill="#666"/>
<rect x="643.22" y="326.82" width="1.3" height="1.30" fill="#f5b041"/>
<rect x="646.88" y="322.32" width="1.3" height="5.80" fill="#3d9bf0"/>
<rect x="650.55" y="324.92" width="1.3" height="3.20" fill="#3d9bf0"/>
<rect x="654.22" y="320.32" width="1.3" height="7.80" fill="#3d9bf0"/>
<rect x="657.88" y="317.72" width="1.3" height="10.40" fill="#ef5a5a"/>
<rect x="661.55" y="321.62" width="1.3" height="6.50" fill="#3d9bf0"/>
<rect x="665.22" y="323.62" width="1.3" height="4.50" fill="#3d9bf0"/>
<rect x="668.88" y="319.02" width="1.3" height="9.10" fill="#3d9bf0"/>
<rect x="672.55" y="319.02" width="1.3" height="9.10" fill="#3d9bf0"/>
<rect x="676.22" y="322.32" width="1.3" height="5.80" fill="#3d9bf0"/>
<rect x="679.88" y="325.52" width="1.3" height="2.60" fill="#3d9bf0"/>
<rect x="683.55" y="326.22" width="1.3" height="1.90" fill="#3d9bf0"/>
<rect x="687.22" y="326.82" width="1.3" height="1.30" fill="#3d9bf0"/>
<rect x="690.88" y="325.52" width="1.3" height="2.60" fill="#3d9bf0"/>
<rect x="694.55" y="325.52" width="1.3" height="2.60" fill="#3d9bf0"/>
<rect x="698.22" y="319.02" width="1.3" height="9.10" fill="#3d9bf0"/>
<rect x="701.88" y="324.92" width="1.3" height="3.20" fill="#3d9bf0"/>
<rect x="705.55" y="325.52" width="1.3" height="2.60" fill="#3d9bf0"/>
<rect x="709.22" y="321.62" width="1.3" height="6.50" fill="#3d9bf0"/>
<rect x="712.88" y="320.32" width="1.3" height="7.80" fill="#3d9bf0"/>
<rect x="716.55" y="326.22" width="1.3" height="1.90" fill="#3d9bf0"/>
<rect x="720.22" y="324.92" width="1.3" height="3.20" fill="#3d9bf0"/>
<rect x="723.88" y="322.32" width="1.3" height="5.80" fill="#3d9bf0"/>
<rect x="727.55" y="324.92" width="1.3" height="3.20" fill="#666"/>
<rect x="639.55" y="342.46" width="1.3" height="5.80" fill="#666"/>
<rect x="643.22" y="341.16" width="1.3" height="7.10" fill="#3d9bf0"/>
<rect x="646.88" y="337.86" width="1.3" height="10.40" fill="#ef5a5a"/>
<rect x="650.55" y="347.26" width="1.3" height="1.00" fill="#f5b041"/>
<rect x="654.22" y="342.46" width="1.3" height="5.80" fill="#3d9bf0"/>
<rect x="657.88" y="345.66" width="1.3" height="2.60" fill="#3d9bf0"/>
<rect x="661.55" y="347.26" width="1.3" height="1.00" fill="#3d9bf0"/>
<rect x="665.22" y="345.06" width="1.3" height="3.20" fill="#3d9bf0"/>
<rect x="668.88" y="343.76" width="1.3" height="4.50" fill="#3d9bf0"/>
<rect x="672.55" y="341.76" width="1.3" height="6.50" fill="#3d9bf0"/>
<rect x="676.22" y="341.76" width="1.3" height="6.50" fill="#3d9bf0"/>
<rect x="679.88" y="342.46" width="1.3" height="5.80" fill="#3d9bf0"/>
<rect x="683.55" y="343.76" width="1.3" height="4.50" fill="#3d9bf0"/>
<rect x="687.22" y="344.36" width="1.3" height="3.90" fill="#3d9bf0"/>
<rect x="690.88" y="345.06" width="1.3" height="3.20" fill="#3d9bf0"/>
<rect x="694.55" y="345.06" width="1.3" height="3.20" fill="#3d9bf0"/>
<rect x="698.22" y="344.36" width="1.3" height="3.90" fill="#3d9bf0"/>
<rect x="701.88" y="345.06" width="1.3" height="3.20" fill="#3d9bf0"/>
<rect x="705.55" y="346.96" width="1.3" height="1.30" fill="#3d9bf0"/>
<rect x="709.22" y="345.06" width="1.3" height="3.20" fill="#3d9bf0"/>
<rect x="712.88" y="343.76" width="1.3" height="4.50" fill="#3d9bf0"/>
<rect x="716.55" y="341.76" width="1.3" height="6.50" fill="#3d9bf0"/>
<rect x="720.22" y="340.46" width="1.3" height="7.80" fill="#3d9bf0"/>
<rect x="723.88" y="342.46" width="1.3" height="5.80" fill="#3d9bf0"/>
<rect x="727.55" y="342.46" width="1.3" height="5.80" fill="#666"/>
<rect x="639.55" y="362.70" width="1.3" height="5.70" fill="#666"/>
<rect x="643.22" y="367.40" width="1.3" height="1.00" fill="#f5b041"/>
<rect x="646.88" y="364.00" width="1.3" height="4.40" fill="#3d9bf0"/>
<rect x="650.55" y="367.10" width="1.3" height="1.30" fill="#3d9bf0"/>
<rect x="654.22" y="362.70" width="1.3" height="5.70" fill="#3d9bf0"/>
<rect x="657.88" y="362.70" width="1.3" height="5.70" fill="#3d9bf0"/>
<rect x="661.55" y="365.30" width="1.3" height="3.10" fill="#3d9bf0"/>
<rect x="665.22" y="366.50" width="1.3" height="1.90" fill="#3d9bf0"/>
<rect x="668.88" y="364.60" width="1.3" height="3.80" fill="#3d9bf0"/>
<rect x="672.55" y="358.40" width="1.3" height="10.00" fill="#ef5a5a"/>
<rect x="676.22" y="365.30" width="1.3" height="3.10" fill="#3d9bf0"/>
<rect x="679.88" y="364.60" width="1.3" height="3.80" fill="#3d9bf0"/>
<rect x="683.55" y="363.40" width="1.3" height="5.00" fill="#3d9bf0"/>
<rect x="687.22" y="362.70" width="1.3" height="5.70" fill="#3d9bf0"/>
<rect x="690.88" y="363.40" width="1.3" height="5.00" fill="#3d9bf0"/>
<rect x="694.55" y="365.30" width="1.3" height="3.10" fill="#3d9bf0"/>
<rect x="698.22" y="365.30" width="1.3" height="3.10" fill="#3d9bf0"/>
<rect x="701.88" y="365.30" width="1.3" height="3.10" fill="#3d9bf0"/>
<rect x="705.55" y="365.30" width="1.3" height="3.10" fill="#3d9bf0"/>
<rect x="709.22" y="365.30" width="1.3" height="3.10" fill="#3d9bf0"/>
<rect x="712.88" y="364.60" width="1.3" height="3.80" fill="#3d9bf0"/>
<rect x="716.55" y="364.60" width="1.3" height="3.80" fill="#3d9bf0"/>
<rect x="720.22" y="364.00" width="1.3" height="4.40" fill="#3d9bf0"/>
<rect x="723.88" y="364.00" width="1.3" height="4.40" fill="#3d9bf0"/>
<rect x="727.55" y="367.10" width="1.3" height="1.30" fill="#666"/>
<rect x="639.55" y="381.04" width="1.3" height="7.50" fill="#666"/>
<rect x="643.22" y="381.04" width="1.3" height="7.50" fill="#3d9bf0"/>
<rect x="646.88" y="382.84" width="1.3" height="5.70" fill="#3d9bf0"/>
<rect x="650.55" y="387.54" width="1.3" height="1.00" fill="#f5b041"/>
<rect x="654.22" y="381.64" width="1.3" height="6.90" fill="#3d9bf0"/>
<rect x="657.88" y="385.44" width="1.3" height="3.10" fill="#3d9bf0"/>
<rect x="661.55" y="382.24" width="1.3" height="6.30" fill="#3d9bf0"/>
<rect x="665.22" y="383.54" width="1.3" height="5.00" fill="#3d9bf0"/>
<rect x="668.88" y="382.24" width="1.3" height="6.30" fill="#3d9bf0"/>
<rect x="672.55" y="384.14" width="1.3" height="4.40" fill="#3d9bf0"/>
<rect x="676.22" y="386.04" width="1.3" height="2.50" fill="#3d9bf0"/>
<rect x="679.88" y="384.74" width="1.3" height="3.80" fill="#3d9bf0"/>
<rect x="683.55" y="384.74" width="1.3" height="3.80" fill="#3d9bf0"/>
<rect x="687.22" y="384.74" width="1.3" height="3.80" fill="#3d9bf0"/>
<rect x="690.88" y="384.14" width="1.3" height="4.40" fill="#3d9bf0"/>
<rect x="694.55" y="384.74" width="1.3" height="3.80" fill="#3d9bf0"/>
<rect x="698.22" y="384.74" width="1.3" height="3.80" fill="#3d9bf0"/>
<rect x="701.88" y="387.24" width="1.3" height="1.30" fill="#3d9bf0"/>
<rect x="705.55" y="386.64" width="1.3" height="1.90" fill="#3d9bf0"/>
<rect x="709.22" y="381.04" width="1.3" height="7.50" fill="#3d9bf0"/>
<rect x="712.88" y="385.44" width="1.3" height="3.10" fill="#3d9bf0"/>
<rect x="716.55" y="382.84" width="1.3" height="5.70" fill="#3d9bf0"/>
<rect x="720.22" y="386.04" width="1.3" height="2.50" fill="#3d9bf0"/>
<rect x="723.88" y="377.84" width="1.3" height="10.70" fill="#ef5a5a"/>
<rect x="727.55" y="387.24" width="1.3" height="1.30" fill="#666"/>
<rect x="639.55" y="404.28" width="1.3" height="4.40" fill="#666"/>
<rect x="643.22" y="407.68" width="1.3" height="1.00" fill="#f5b041"/>
<rect x="646.88" y="406.18" width="1.3" height="2.50" fill="#3d9bf0"/>
<rect x="650.55" y="405.58" width="1.3" height="3.10" fill="#3d9bf0"/>
<rect x="654.22" y="404.88" width="1.3" height="3.80" fill="#3d9bf0"/>
<rect x="657.88" y="402.98" width="1.3" height="5.70" fill="#3d9bf0"/>
<rect x="661.55" y="406.78" width="1.3" height="1.90" fill="#3d9bf0"/>
<rect x="665.22" y="406.78" width="1.3" height="1.90" fill="#3d9bf0"/>
<rect x="668.88" y="406.18" width="1.3" height="2.50" fill="#3d9bf0"/>
<rect x="672.55" y="404.88" width="1.3" height="3.80" fill="#3d9bf0"/>
<rect x="676.22" y="399.88" width="1.3" height="8.80" fill="#3d9bf0"/>
<rect x="679.88" y="405.58" width="1.3" height="3.10" fill="#3d9bf0"/>
<rect x="683.55" y="398.68" width="1.3" height="10.00" fill="#ef5a5a"/>
<rect x="687.22" y="401.78" width="1.3" height="6.90" fill="#3d9bf0"/>
<rect x="690.88" y="404.88" width="1.3" height="3.80" fill="#3d9bf0"/>
<rect x="694.55" y="403.68" width="1.3" height="5.00" fill="#3d9bf0"/>
<rect x="698.22" y="402.38" width="1.3" height="6.30" fill="#3d9bf0"/>
<rect x="701.88" y="401.78" width="1.3" height="6.90" fill="#3d9bf0"/>
<rect x="705.55" y="403.68" width="1.3" height="5.00" fill="#3d9bf0"/>
<rect x="709.22" y="401.18" width="1.3" height="7.50" fill="#3d9bf0"/>
<rect x="712.88" y="406.18" width="1.3" height="2.50" fill="#3d9bf0"/>
<rect x="716.55" y="404.28" width="1.3" height="4.40" fill="#3d9bf0"/>
<rect x="720.22" y="404.28" width="1.3" height="4.40" fill="#3d9bf0"/>
<rect x="723.88" y="404.88" width="1.3" height="3.80" fill="#3d9bf0"/>
<rect x="727.55" y="404.28" width="1.3" height="4.40" fill="#666"/>
<rect x="639.55" y="427.22" width="1.3" height="1.60" fill="#666"/>
<rect x="643.22" y="424.52" width="1.3" height="4.30" fill="#3d9bf0"/>
<rect x="646.88" y="426.72" width="1.3" height="2.10" fill="#3d9bf0"/>
<rect x="650.55" y="426.12" width="1.3" height="2.70" fill="#3d9bf0"/>
<rect x="654.22" y="426.72" width="1.3" height="2.10" fill="#3d9bf0"/>
<rect x="657.88" y="426.12" width="1.3" height="2.70" fill="#3d9bf0"/>
<rect x="661.55" y="427.92" width="1.3" height="0.90" fill="#f5b041"/>
<rect x="665.22" y="424.52" width="1.3" height="4.30" fill="#3d9bf0"/>
<rect x="668.88" y="427.72" width="1.3" height="1.10" fill="#3d9bf0"/>
<rect x="672.55" y="425.02" width="1.3" height="3.80" fill="#3d9bf0"/>
<rect x="676.22" y="426.72" width="1.3" height="2.10" fill="#3d9bf0"/>
<rect x="679.88" y="424.52" width="1.3" height="4.30" fill="#3d9bf0"/>
<rect x="683.55" y="418.62" width="1.3" height="10.20" fill="#ef5a5a"/>
<rect x="687.22" y="424.52" width="1.3" height="4.30" fill="#3d9bf0"/>
<rect x="690.88" y="425.02" width="1.3" height="3.80" fill="#3d9bf0"/>
<rect x="694.55" y="421.82" width="1.3" height="7.00" fill="#3d9bf0"/>
<rect x="698.22" y="424.52" width="1.3" height="4.30" fill="#3d9bf0"/>
<rect x="701.88" y="427.92" width="1.3" height="0.90" fill="#3d9bf0"/>
<rect x="705.55" y="426.72" width="1.3" height="2.10" fill="#3d9bf0"/>
<rect x="709.22" y="426.72" width="1.3" height="2.10" fill="#3d9bf0"/>
<rect x="712.88" y="426.72" width="1.3" height="2.10" fill="#3d9bf0"/>
<rect x="716.55" y="427.72" width="1.3" height="1.10" fill="#3d9bf0"/>
<rect x="720.22" y="420.72" width="1.3" height="8.10" fill="#3d9bf0"/>
<rect x="723.88" y="426.72" width="1.3" height="2.10" fill="#3d9bf0"/>
<rect x="727.55" y="426.72" width="1.3" height="2.10" fill="#666"/>
<rect x="639.55" y="447.96" width="1.3" height="1.00" fill="#666"/>
<rect x="643.22" y="446.36" width="1.3" height="2.60" fill="#3d9bf0"/>
<rect x="646.88" y="441.96" width="1.3" height="7.00" fill="#3d9bf0"/>
<rect x="650.55" y="438.96" width="1.3" height="10.00" fill="#ef5a5a"/>
<rect x="654.22" y="448.46" width="1.3" height="0.50" fill="#f5b041"/>
<rect x="657.88" y="448.46" width="1.3" height="0.50" fill="#3d9bf0"/>
<rect x="661.55" y="445.56" width="1.3" height="3.40" fill="#3d9bf0"/>
<rect x="665.22" y="445.56" width="1.3" height="3.40" fill="#3d9bf0"/>
<rect x="668.88" y="439.46" width="1.3" height="9.50" fill="#3d9bf0"/>
<rect x="672.55" y="439.46" width="1.3" height="9.50" fill="#3d9bf0"/>
<rect x="676.22" y="446.16" width="1.3" height="2.80" fill="#3d9bf0"/>
<rect x="679.88" y="443.36" width="1.3" height="5.60" fill="#3d9bf0"/>
<rect x="683.55" y="441.96" width="1.3" height="7.00" fill="#3d9bf0"/>
<rect x="687.22" y="443.36" width="1.3" height="5.60" fill="#3d9bf0"/>
<rect x="690.88" y="446.16" width="1.3" height="2.80" fill="#3d9bf0"/>
<rect x="694.55" y="441.96" width="1.3" height="7.00" fill="#3d9bf0"/>
<rect x="698.22" y="445.56" width="1.3" height="3.40" fill="#3d9bf0"/>
<rect x="701.88" y="443.36" width="1.3" height="5.60" fill="#3d9bf0"/>
<rect x="705.55" y="438.96" width="1.3" height="10.00" fill="#3d9bf0"/>
<rect x="709.22" y="446.16" width="1.3" height="2.80" fill="#3d9bf0"/>
<rect x="712.88" y="445.56" width="1.3" height="3.40" fill="#3d9bf0"/>
<rect x="716.55" y="442.76" width="1.3" height="6.20" fill="#3d9bf0"/>
<rect x="720.22" y="448.46" width="1.3" height="0.50" fill="#3d9bf0"/>
<rect x="723.88" y="443.36" width="1.3" height="5.60" fill="#3d9bf0"/>
<rect x="727.55" y="445.56" width="1.3" height="3.40" fill="#666"/>
</svg></div>
<div class="a" style="left:775.40px;top:47.80px;font-size:6.75px;line-height:10px;color:#555">External Contact</div>
<div class="a" style="left:775.40px;top:59.00px;font-size:6.75px;line-height:10px;color:#555">Hotline Agent</div>
<div class="a" style="left:775.40px;top:70.20px;font-size:6.75px;line-height:10px;color:#555">Confidential Portal</div>
<div class="a" style="left:854.50px;top:47.80px;font-size:6.75px;line-height:10px;color:#555">Other</div>
<div class="a" style="left:854.50px;top:59.00px;font-size:6.75px;line-height:10px;color:#555">Vendor</div>
<div class="a" style="left:854.50px;top:70.20px;font-size:6.75px;line-height:10px;color:#555">Employee</div>
<div class="a" style="left:933.60px;top:47.80px;font-size:6.75px;line-height:10px;color:#555">Law Enforcement Ori...</div>
<div class="a" style="left:933.60px;top:59.00px;font-size:6.75px;line-height:10px;color:#555">Email Submission</div>
<div class="a" style="left:775.40px;top:273.70px;font-size:6.75px;line-height:10px;color:#555">Velocity House</div>
<div class="a" style="left:775.40px;top:284.90px;font-size:6.75px;line-height:10px;color:#555">Horizon Center</div>
<div class="a" style="left:854.50px;top:273.70px;font-size:6.75px;line-height:10px;color:#555">Apex Tower</div>
<div class="a" style="left:854.50px;top:284.90px;font-size:6.75px;line-height:10px;color:#555">Aurora Tower</div>
<div class="a" style="left:933.60px;top:273.70px;font-size:6.75px;line-height:10px;color:#555">Nexus Plaza</div>
<svg class="a" style="left:0;top:0" width="1024" height="478" viewBox="0 0 1024 478">
<path d="M885.00,93.10 A60.5,60.5 0 1 1 837.98,191.67 L856.79,176.44 A36.3,36.3 0 1 0 885.00,117.30 Z" fill="#6bcbdd"/>
<path d="M838.38,192.16 A60.5,60.5 0 0 1 849.10,104.90 L863.46,124.38 A36.3,36.3 0 0 0 857.03,176.74 Z" fill="#fde8bf"/>
<path d="M848.59,105.28 A60.5,60.5 0 0 1 860.97,98.08 L870.58,120.29 A36.3,36.3 0 0 0 863.15,124.61 Z" fill="#7366bb"/>
<path d="M860.39,98.33 A60.5,60.5 0 0 1 877.84,93.53 L880.70,117.56 A36.3,36.3 0 0 0 870.24,120.44 Z" fill="#ee5a5a"/>
<path d="M877.21,93.60 A60.5,60.5 0 0 1 881.41,93.21 L882.85,117.36 A36.3,36.3 0 0 0 880.32,117.60 Z" fill="#a99de2"/>
<path d="M880.78,93.25 A60.5,60.5 0 0 1 885.00,93.10 L885.00,117.30 A36.3,36.3 0 0 0 882.47,117.39 Z" fill="#4a80d9"/>
<path d="M885.30,307.90 A69,69 0 0 1 944.93,411.61 L921.08,397.73 A41.4,41.4 0 0 0 885.30,335.50 Z" fill="#7168b9"/>
<path d="M945.30,410.98 A69,69 0 0 1 854.19,438.49 L866.63,413.85 A41.4,41.4 0 0 0 921.30,397.35 Z" fill="#4e87d7"/>
<path d="M854.84,438.81 A69,69 0 0 1 816.32,375.21 L843.91,375.89 A41.4,41.4 0 0 0 867.02,414.05 Z" fill="#21a1c4"/>
<path d="M816.31,375.94 A69,69 0 0 1 837.89,326.77 L856.85,346.82 A41.4,41.4 0 0 0 843.90,376.32 Z" fill="#20b29a"/>
<path d="M837.37,327.27 A69,69 0 0 1 885.30,307.90 L885.30,335.50 A41.4,41.4 0 0 0 856.54,347.12 Z" fill="#fdc768"/>
<rect x="766.9" y="48.40" width="5.5" height="6.6" fill="#4a80d9"/>
<rect x="766.9" y="59.60" width="5.5" height="6.6" fill="#ee5b5b"/>
<rect x="766.9" y="70.80" width="5.5" height="6.6" fill="#fde8bf"/>
<rect x="846.0" y="48.40" width="5.5" height="6.6" fill="#a99de2"/>
<rect x="846.0" y="59.60" width="5.5" height="6.6" fill="#7366bb"/>
<rect x="846.0" y="70.80" width="5.5" height="6.6" fill="#6bcbdd"/>
<rect x="925.1" y="48.40" width="5.5" height="6.6" fill="#eb5a60"/>
<rect x="925.1" y="59.60" width="5.5" height="6.6" fill="#fde8bf"/>
<rect x="766.9" y="274.30" width="5.5" height="6.6" fill="#fdc768"/>
<rect x="766.9" y="285.50" width="5.5" height="6.6" fill="#4e87d7"/>
<rect x="846.0" y="274.30" width="5.5" height="6.6" fill="#20b29a"/>
<rect x="846.0" y="285.50" width="5.5" height="6.6" fill="#7168b9"/>
<rect x="925.1" y="274.30" width="5.5" height="6.6" fill="#21a1c4"/>
</svg>
</body></html>
